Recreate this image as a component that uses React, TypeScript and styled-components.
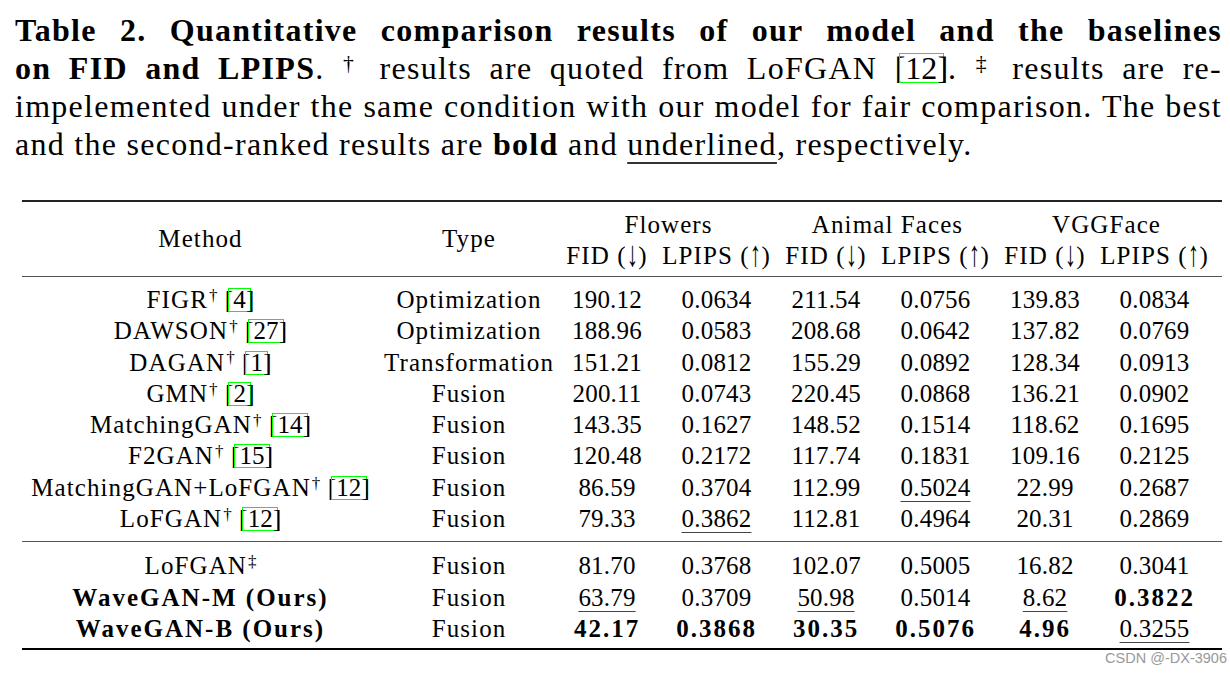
import React from 'react';
import styled, { createGlobalStyle } from 'styled-components';

type Row = { name: string; mark: string; cite?: string; strong?: boolean; type: string; vals: string[] };

// '*' = best (bold), '_' = second (underlined)
const baselines: Row[] = [
  { name: 'FIGR', mark: '†', cite: '4', type: 'Optimization', vals: ['190.12', '0.0634', '211.54', '0.0756', '139.83', '0.0834'] },
  { name: 'DAWSON', mark: '†', cite: '27', type: 'Optimization', vals: ['188.96', '0.0583', '208.68', '0.0642', '137.82', '0.0769'] },
  { name: 'DAGAN', mark: '†', cite: '1', type: 'Transformation', vals: ['151.21', '0.0812', '155.29', '0.0892', '128.34', '0.0913'] },
  { name: 'GMN', mark: '†', cite: '2', type: 'Fusion', vals: ['200.11', '0.0743', '220.45', '0.0868', '136.21', '0.0902'] },
  { name: 'MatchingGAN', mark: '†', cite: '14', type: 'Fusion', vals: ['143.35', '0.1627', '148.52', '0.1514', '118.62', '0.1695'] },
  { name: 'F2GAN', mark: '†', cite: '15', type: 'Fusion', vals: ['120.48', '0.2172', '117.74', '0.1831', '109.16', '0.2125'] },
  { name: 'MatchingGAN+LoFGAN', mark: '†', cite: '12', type: 'Fusion', vals: ['86.59', '0.3704', '112.99', '_0.5024', '22.99', '0.2687'] },
  { name: 'LoFGAN', mark: '†', cite: '12', type: 'Fusion', vals: ['79.33', '_0.3862', '112.81', '0.4964', '20.31', '0.2869'] },
];

const ours: Row[] = [
  { name: 'LoFGAN', mark: '‡', type: 'Fusion', vals: ['81.70', '0.3768', '102.07', '0.5005', '16.82', '0.3041'] },
  { name: 'WaveGAN-M (Ours)', mark: '', strong: true, type: 'Fusion', vals: ['_63.79', '0.3709', '_50.98', '0.5014', '_8.62', '*0.3822'] },
  { name: 'WaveGAN-B (Ours)', mark: '', strong: true, type: 'Fusion', vals: ['*42.17', '*0.3868', '*30.35', '*0.5076', '*4.96', '_0.3255'] },
];

const colWidths = [357, 180, 96, 123, 96, 123, 96, 129];

function Cite({ n }: { n: string }) {
  return (
    <CiteWrap>
      [<CiteBox>{n}</CiteBox>]
    </CiteWrap>
  );
}

function Metric({ name, up }: { name: string; up?: boolean }) {
  return (
    <>
      {name} (<Arrow>{up ? '↑' : '↓'}</Arrow>)
    </>
  );
}

function Value({ v }: { v: string }) {
  const kind = v[0] === '*' ? 'best' : v[0] === '_' ? 'second' : undefined;
  return <Val $kind={kind}>{kind ? v.slice(1) : v}</Val>;
}

function MethodRow({ r }: { r: Row }) {
  return (
    <tr>
      <Td>
        <Name $strong={r.strong}>{r.name}</Name>
        {r.mark && <Mark>{r.mark}</Mark>}
        {r.cite && <> <Cite n={r.cite} /></>}
      </Td>
      <Td>{r.type}</Td>
      {r.vals.map((v, i) => (
        <Td key={i} $last={i === 5}>
          <Value v={v} />
        </Td>
      ))}
    </tr>
  );
}

export default function App() {
  return (
    <>
      <GlobalStyle />
      <Page>
        <Caption>
          <CaptionLine>
            <b>Table 2. Quantitative comparison results of our model and the baselines</b>
          </CaptionLine>
          <CaptionLine>
            <b>on FID and LPIPS</b>. <Mark>†</Mark> results are quoted from LoFGAN <Cite n="12" />. <Mark>‡</Mark> results are re-
          </CaptionLine>
          <CaptionLine>
            impelemented under the same condition with our model for fair comparison. The best
          </CaptionLine>
          <CaptionLine $last>
            and the second-ranked results are <b>bold</b> and <Under>underlined</Under>, respectively.
          </CaptionLine>
        </Caption>

        <Table>
          <colgroup>
            {colWidths.map((w, i) => <Col key={i} $w={w} />)}
          </colgroup>
          <thead>
            <HeadTop>
              <SpanHead rowSpan={2}>Method</SpanHead>
              <SpanHead rowSpan={2}>Type</SpanHead>
              <Th colSpan={2}>Flowers</Th>
              <Th colSpan={2}>Animal Faces</Th>
              <Th colSpan={2} $last>VGGFace</Th>
            </HeadTop>
            <HeadSub>
              <Th><Metric name="FID" /></Th>
              <Th><Metric name="LPIPS" up /></Th>
              <Th><Metric name="FID" /></Th>
              <Th><Metric name="LPIPS" up /></Th>
              <Th><Metric name="FID" /></Th>
              <Th $last><Metric name="LPIPS" up /></Th>
            </HeadSub>
          </thead>
          <Section $top={7} $bottom={7} $rule>
            {baselines.map((r, i) => <MethodRow key={i} r={r} />)}
          </Section>
          <Section $top={8} $bottom={4}>
            {ours.map((r, i) => <MethodRow key={i} r={r} />)}
          </Section>
        </Table>

        <Watermark>CSDN @-DX-3906</Watermark>
      </Page>
    </>
  );
}

const GlobalStyle = createGlobalStyle`
  html, body {
    margin: 0;
    padding: 0;
    background: #fff;
  }
  body {
    width: 1230px;
    height: 674px;
    overflow: hidden;
    color: #000;
    font-family: "Liberation Serif", "Times New Roman", serif;
  }
`;

const Page = styled.div`
  padding: 11px 0 0 15px;
`;

const Caption = styled.div`
  width: 1207px;
  font-size: 32px;
  line-height: 38px;
  letter-spacing: 0.04em;
`;

const CaptionLine = styled.div<{ $last?: boolean }>`
  text-align: justify;
  text-align-last: ${p => (p.$last ? 'left' : 'justify')};
  white-space: nowrap;
`;

const Under = styled.span`
  text-decoration: underline;
  text-decoration-thickness: 1.5px;
  text-decoration-color: #333;
  text-underline-offset: 7px;
`;

const Mark = styled.span`
  font-size: 0.68em;
  vertical-align: 0.42em;
  line-height: 0;
  letter-spacing: 0;
  margin-left: 1px;
`;

const CiteWrap = styled.span`
  white-space: nowrap;
  letter-spacing: 0;
`;

const CiteBox = styled.span`
  display: inline-block;
  line-height: 0.88em;
  padding: 0 0.17em;
  margin: 0 -0.2em;
  border: 1px solid #00ff00;
`;

const Arrow = styled.span`
  display: inline-block;
  transform: scale(0.9, 1.45);
  transform-origin: 50% 62%;
  margin: 0 -1px;
`;

const Table = styled.table`
  margin: 37px 0 0 7px;
  width: 1200px;
  table-layout: fixed;
  border-collapse: separate;
  border-spacing: 0;
  border-top: 2px solid #222;
  border-bottom: 2px solid #000;
  font-family: "Liberation Serif", "Times New Roman", serif;
  font-size: 25px;
  letter-spacing: 1.1px;
`;

const Col = styled.col<{ $w: number }>`
  width: ${p => p.$w}px;
`;

const Th = styled.th<{ $last?: boolean }>`
  padding: 0 ${p => (p.$last ? 6 : 0)}px 0 0;
  font-weight: normal;
  text-align: center;
  white-space: nowrap;
`;

const SpanHead = styled(Th)`
  vertical-align: middle;
  border-bottom: 1.5px solid #555;
`;

const HeadTop = styled.tr`
  ${Th}:not(${SpanHead}) {
    padding-top: 7px;
    line-height: 32px;
  }
`;

const HeadSub = styled.tr`
  ${Th} {
    line-height: 30px;
    padding-bottom: 5px;
    border-bottom: 1.5px solid #555;
  }
`;

const Section = styled.tbody<{ $top: number; $bottom: number; $rule?: boolean }>`
  tr:first-child td {
    padding-top: ${p => p.$top}px;
  }
  tr:last-child td {
    padding-bottom: ${p => p.$bottom}px;
    ${p => (p.$rule ? 'border-bottom: 1.5px solid #555;' : '')}
  }
`;

const Td = styled.td<{ $last?: boolean }>`
  padding: 0 ${p => (p.$last ? 6 : 0)}px 0 0;
  text-align: center;
  white-space: nowrap;
  line-height: 31.3px;
`;

const Name = styled.span<{ $strong?: boolean }>`
  font-weight: ${p => (p.$strong ? 700 : 400)};
  letter-spacing: ${p => (p.$strong ? 2 : 1.1)}px;
`;

const Val = styled.span<{ $kind?: 'best' | 'second' }>`
  letter-spacing: ${p => (p.$kind === 'best' ? 2 : 0.2)}px;
  font-weight: ${p => (p.$kind === 'best' ? 700 : 400)};
  text-decoration: ${p => (p.$kind === 'second' ? 'underline' : 'none')};
  text-decoration-thickness: 1px;
  text-decoration-color: #444;
  text-underline-offset: 5px;
`;

const Watermark = styled.div`
  width: 1212px;
  text-align: right;
  font-family: "Liberation Sans", Arial, sans-serif;
  font-size: 14.5px;
  line-height: 16px;
  color: #999;
`;
